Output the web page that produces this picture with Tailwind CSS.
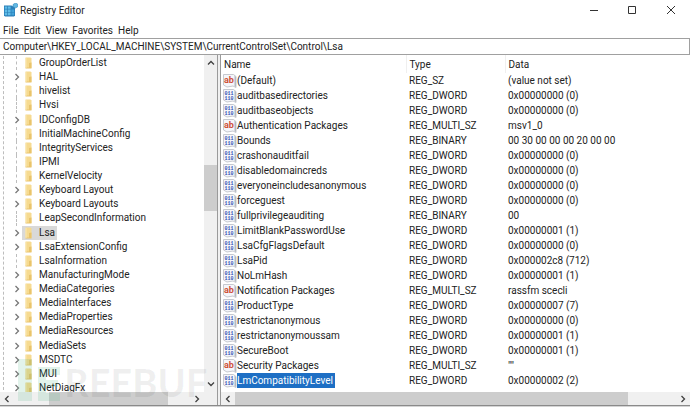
<!DOCTYPE html>
<html lang="en">
<head>
  <meta charset="UTF-8" />
  <meta name="viewport" content="width=device-width, initial-scale=1.0"/>
  <title>Registry Editor</title>
  <script src="https://cdn.jsdelivr.net/npm/@tailwindcss/browser@4"></script>
</head>
<body class="bg-white font-['Roboto','Open_Sans',sans-serif] text-[10px] text-[#222]">

  <!-- Icons -->
  <svg class="hidden">
    <symbol id="icon-folder" viewBox="0 0 8 12">
      <path d="M.5.5h5l1 1v9.500h-6z" fill="#f6da90"/>
      <path d="M4 6l2.500-.5v6h-6v-1H4z" fill="#e9c46c"/>
      <path d="M1 1v10" stroke="#fae7b0" stroke-width="1"/>
    </symbol>
    <symbol id="icon-chevron" viewBox="0 0 6 8">
      <path d="M1.500 1l3 3-3 3" fill="none" stroke="currentColor" stroke-width="1.300"/>
    </symbol>
    <symbol id="icon-page" viewBox="0 0 14 14">
      <path d="M.5.5h10l2.500 2v11l-3-1.500-3 .5-3 .5-3.500-2z" fill="#f5f6fa" stroke="#c0c3c9" stroke-width=".9"/>
      <path d="M11.500 1.500l1.500 1.500v10l-1.500-1z" fill="#b4b8c0"/>
    </symbol>
  </svg>

  <div class="flex h-screen flex-col overflow-hidden">

    <!-- Title bar -->
    <header class="flex h-5 shrink-0 items-center pl-1">
      <svg class="h-3.5 w-3.5" viewBox="0 0 14 14">
        <path d="M0 2.500h7.500l3.500 2v8l-1 1H1l-1-1z" fill="#2b7fb8"/>
        <path d="M.8 3.400h2.500v2.400H.8zM4 3.400h2.600v2.400H4zM.8 6.500h2.500v2.400H.8zM4 6.500h2.600v2.400H4zM.8 9.600h2.500v2.600H.8zM4 9.600h2.600v2.600H4z" fill="#5fbde8"/>
        <path d="M7.400 6.500h2.800v2.400H7.400zM7.400 9.600h2.800v2.600H7.400z" fill="#41a2d8"/>
        <path d="M9 1.500L11.500 0l2.300 1.200v2.500L11.500 5 9 3.800z" fill="#62b8e2" stroke="#2f86bd" stroke-width=".6"/>
      </svg>
      <h1 class="ml-0.5 flex-1">Registry Editor</h1>
      <button class="flex w-[38px] justify-center" aria-label="Minimize">
        <svg class="h-2.5 w-2.5" viewBox="0 0 10 10"><path d="M1 5.500h8" stroke="#333"/></svg>
      </button>
      <button class="flex w-[38px] justify-center" aria-label="Maximize">
        <svg class="h-2.5 w-2.5" viewBox="0 0 10 10"><path d="M1.500 1.500h7v7h-7z" fill="none" stroke="#333"/></svg>
      </button>
      <button class="flex w-[39px] justify-center" aria-label="Close">
        <svg class="h-2.5 w-2.5" viewBox="0 0 10 10"><path d="M1 1l8 8M9 1L1 9" stroke="#333"/></svg>
      </button>
    </header>

    <!-- Menu -->
    <nav class="flex h-[18px] shrink-0 items-center gap-[5px] pl-[3px] pt-0.5">
      <button>File</button>
      <button>Edit</button>
      <button>View</button>
      <button>Favorites</button>
      <button>Help</button>
    </nav>

    <!-- Address bar -->
    <input
      type="text"
      aria-label="Address"
      value="Computer\HKEY_LOCAL_MACHINE\SYSTEM\CurrentControlSet\Control\Lsa"
      class="h-[17px] shrink-0 border-y border-r border-[#a0a0a0] pl-[3px] outline-none"
    />

    <main class="flex min-h-0 flex-1">

      <!-- Keys -->
      <section class="relative grid w-[218px] shrink-0 grid-cols-[1fr_13px] grid-rows-[1fr_13px] border-r border-[#9a9a9a]">
        <div class="min-h-0 overflow-hidden pl-[3px] pt-px">
          <ul id="keys" role="tree" class="flex h-[339px] flex-col border-l border-dashed border-[#bdbdbd] pl-3"></ul>
        </div>
        <div class="flex flex-col items-center bg-[#f0f0f0] py-1">
          <button aria-label="Scroll up"><svg class="h-2 w-1.5 -rotate-90 text-[#404040]"><use href="#icon-chevron"/></svg></button>
          <div class="mt-[98px] h-[46px] w-full bg-[#cdcdcd]"></div>
          <button class="mt-auto" aria-label="Scroll down"><svg class="h-2 w-1.5 rotate-90 text-[#404040]"><use href="#icon-chevron"/></svg></button>
        </div>
        <div class="flex items-center bg-[#f0f0f0] pl-1">
          <button aria-label="Scroll left"><svg class="h-2 w-1.5 rotate-180 text-[#404040]"><use href="#icon-chevron"/></svg></button>
          <div class="ml-[39px] h-full w-[119px] bg-[#cdcdcd]"></div>
          <button class="ml-auto mr-1" aria-label="Scroll right"><svg class="h-2 w-1.5 text-[#404040]"><use href="#icon-chevron"/></svg></button>
        </div>
        <div class="bg-[#f0f0f0]"></div>

        <!-- Watermark -->
        <div class="pointer-events-none absolute bottom-1 left-[18px] flex items-center gap-1">
          <svg class="h-[42px] w-[42px]" viewBox="0 0 42 42">
            <path d="M0 0h14v42H0zM20 8h22v8H28v5h12v7H28v6h14v8H20z" fill="#3fae7a" fill-opacity=".15"/>
          </svg>
          <span class="pt-1 font-['Lato',sans-serif] text-[38px] leading-9 font-black text-black/6">REEBUF</span>
        </div>
      </section>

      <div class="w-0.5 shrink-0 bg-[#f0f0f0]"></div>

      <!-- Values -->
      <section class="flex min-w-0 flex-1 flex-col border-l border-[#9a9a9a]">
        <div class="min-h-0 flex-1 overflow-hidden">
          <table class="w-full table-fixed text-left">
            <thead>
              <tr class="h-[18px] leading-[15px]">
                <th class="w-[185px] border-r border-[#efefef] pl-[3px] font-normal">Name</th>
                <th class="w-[99px] border-r border-[#efefef] pl-[3px] font-normal">Type</th>
                <th class="pl-[3px] font-normal">Data</th>
              </tr>
            </thead>
            <tbody id="values"></tbody>
          </table>
        </div>
        <div class="flex h-[13px] shrink-0 items-center bg-[#f0f0f0] px-1">
          <button aria-label="Scroll left"><svg class="h-2 w-1.5 rotate-180 text-[#404040]"><use href="#icon-chevron"/></svg></button>
          <div class="mr-[52px] h-full flex-1 bg-[#cdcdcd] ml-1"></div>
          <button aria-label="Scroll right"><svg class="h-2 w-1.5 text-[#404040]"><use href="#icon-chevron"/></svg></button>
        </div>
      </section>
    </main>

    <footer class="h-0.5 shrink-0 border-t border-[#8a8a8a] bg-[#d4d4d4]"></footer>
  </div>

  <script>
    // [name, has children]
    const keys = [
      ['GroupOrderList', false], ['HAL', true], ['hivelist', false], ['Hvsi', false],
      ['IDConfigDB', true], ['InitialMachineConfig', false], ['IntegrityServices', false],
      ['IPMI', false], ['KernelVelocity', false], ['Keyboard Layout', true],
      ['Keyboard Layouts', true], ['LeapSecondInformation', false], ['Lsa', true],
      ['LsaExtensionConfig', true], ['LsaInformation', false], ['ManufacturingMode', true],
      ['MediaCategories', true], ['MediaInterfaces', true], ['MediaProperties', true],
      ['MediaResources', true], ['MediaSets', true], ['MSDTC', true], ['MUI', true],
      ['NetDiagFx', true]
    ];

    const values = [
      ['(Default)', 'REG_SZ', '(value not set)'],
      ['auditbasedirectories', 'REG_DWORD', '0x00000000 (0)'],
      ['auditbaseobjects', 'REG_DWORD', '0x00000000 (0)'],
      ['Authentication Packages', 'REG_MULTI_SZ', 'msv1_0'],
      ['Bounds', 'REG_BINARY', '00 30 00 00 00 20 00 00'],
      ['crashonauditfail', 'REG_DWORD', '0x00000000 (0)'],
      ['disabledomaincreds', 'REG_DWORD', '0x00000000 (0)'],
      ['everyoneincludesanonymous', 'REG_DWORD', '0x00000000 (0)'],
      ['forceguest', 'REG_DWORD', '0x00000000 (0)'],
      ['fullprivilegeauditing', 'REG_BINARY', '00'],
      ['LimitBlankPasswordUse', 'REG_DWORD', '0x00000001 (1)'],
      ['LsaCfgFlagsDefault', 'REG_DWORD', '0x00000000 (0)'],
      ['LsaPid', 'REG_DWORD', '0x000002c8 (712)'],
      ['NoLmHash', 'REG_DWORD', '0x00000001 (1)'],
      ['Notification Packages', 'REG_MULTI_SZ', 'rassfm scecli'],
      ['ProductType', 'REG_DWORD', '0x00000007 (7)'],
      ['restrictanonymous', 'REG_DWORD', '0x00000000 (0)'],
      ['restrictanonymoussam', 'REG_DWORD', '0x00000001 (1)'],
      ['SecureBoot', 'REG_DWORD', '0x00000001 (1)'],
      ['Security Packages', 'REG_MULTI_SZ', '""'],
      ['LmCompatibilityLevel', 'REG_DWORD', '0x00000002 (2)']
    ];

    const branch = '<span class="h-full w-1.5 border-l border-dashed border-[#bdbdbd]"></span>';
    const chevron = '<svg class="-ml-0.5 mr-0.5 h-2 w-1.5 text-[#777]"><use href="#icon-chevron"/></svg>';

    document.getElementById('keys').innerHTML = keys.map(([name, open]) => `
      <li role="treeitem" class="flex min-h-0 flex-1 items-center">
        ${open ? chevron : branch}
        <span class="flex h-full items-center gap-1.5 pl-[3px] pr-0.5 leading-[14px] ${name === 'Lsa' ? 'bg-[#d9d9d9]' : ''}">
          <svg class="h-3 w-2"><use href="#icon-folder"/></svg>
          <span>${name}</span>
        </span>
      </li>`).join('');

    const textIcon = '<text x="1" y="9" font-size="9" font-weight="700" fill="#cf5238">ab</text>';
    const binaryIcon = '<g font-family="Liberation Mono" font-size="5" font-weight="700" fill="#3450b4"><text x="1.500" y="6">011</text><text x="1.500" y="11">110</text></g>';

    document.getElementById('values').innerHTML = values.map(([name, type, data]) => `
      <tr class="h-[15px] leading-[15px]">
        <td>
          <div class="flex items-center pl-0.5">
            <svg class="h-3.5 w-3.5" viewBox="0 0 14 14"><use href="#icon-page"/>${type.endsWith('SZ') ? textIcon : binaryIcon}</svg>
            <span class="${name === 'LmCompatibilityLevel' ? 'bg-[#1e6fc4] pr-0.5 text-white' : ''}">${name}</span>
          </div>
        </td>
        <td class="pl-[3px]">${type}</td>
        <td class="pl-[3px]">${data}</td>
      </tr>`).join('');
  </script>
</body>
</html>
